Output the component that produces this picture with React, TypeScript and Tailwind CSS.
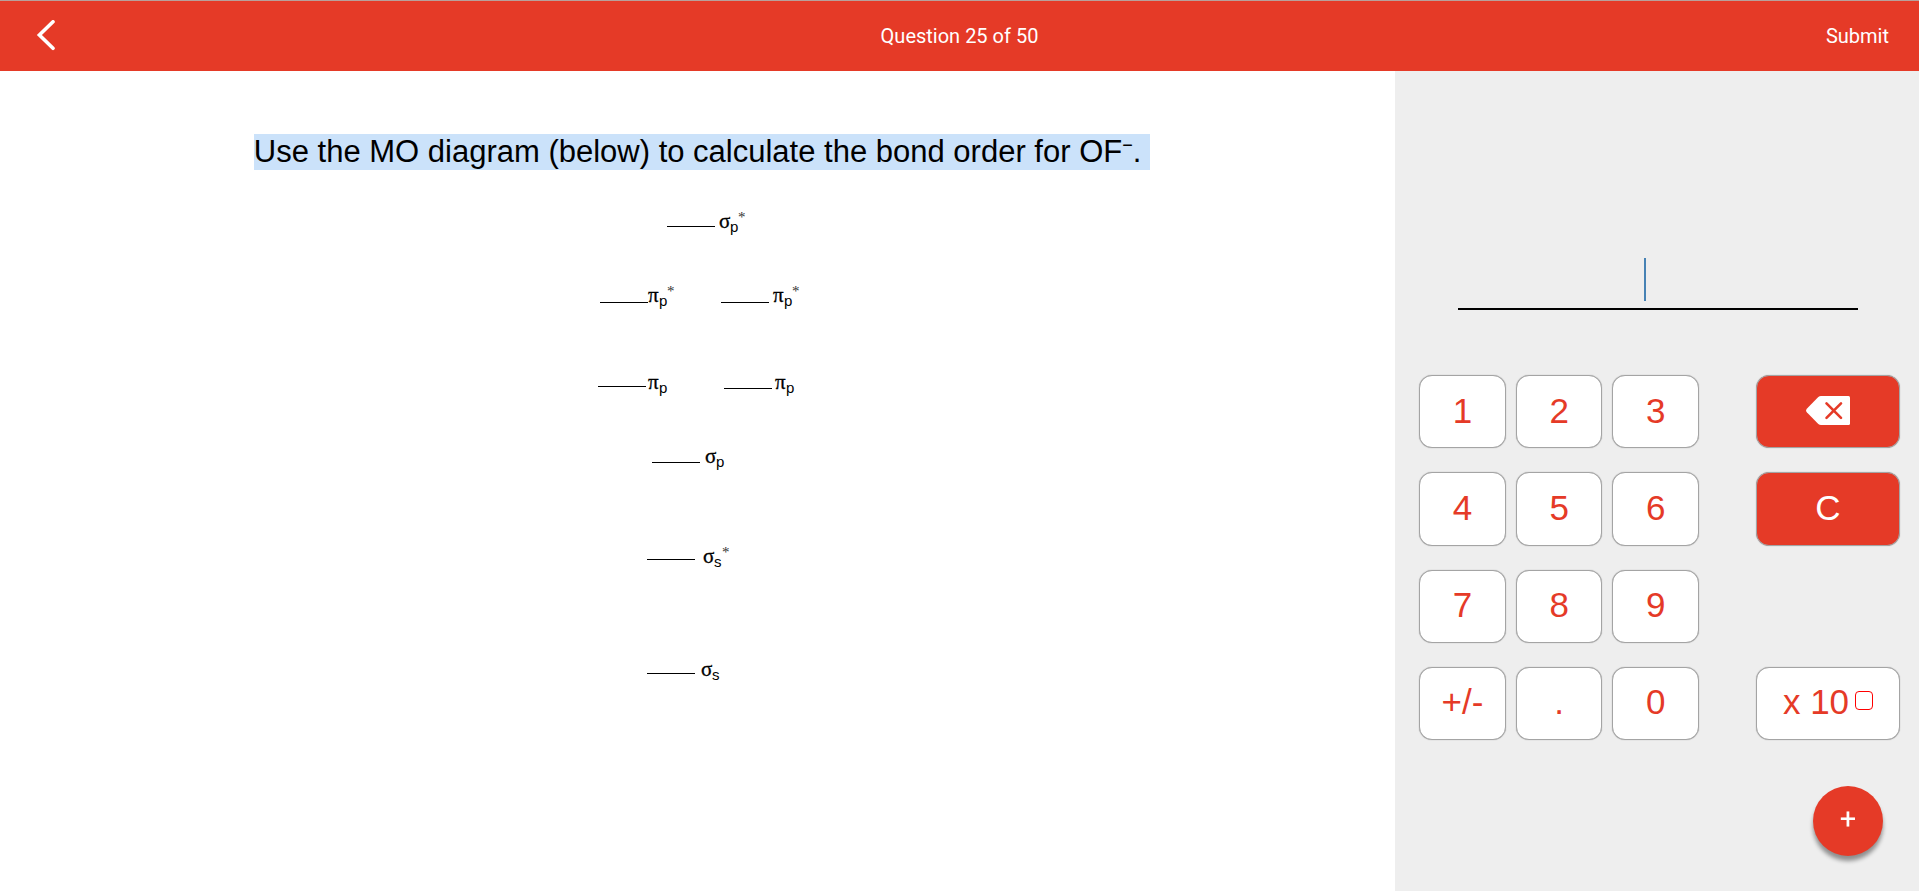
import { useState } from "react";

type Orbital = {
  symbol: string;
  sub: string;
  antibonding?: boolean;
  lineX: number;
  lineY: number;
  textX: number;
  textY: number;
};

const orbitals: Orbital[] = [
  { symbol: "σ", sub: "p", antibonding: true, lineX: 69, lineY: 26, textX: 121, textY: 28 },
  { symbol: "π", sub: "p", antibonding: true, lineX: 2, lineY: 102, textX: 50, textY: 102 },
  { symbol: "π", sub: "p", antibonding: true, lineX: 123, lineY: 102, textX: 175, textY: 102 },
  { symbol: "π", sub: "p", lineX: 0, lineY: 186, textX: 50, textY: 189 },
  { symbol: "π", sub: "p", lineX: 126, lineY: 188, textX: 177, textY: 189 },
  { symbol: "σ", sub: "p", lineX: 54, lineY: 262, textX: 107, textY: 263 },
  { symbol: "σ", sub: "s", antibonding: true, lineX: 49, lineY: 359, textX: 105, textY: 363 },
  { symbol: "σ", sub: "s", lineX: 49, lineY: 473, textX: 103, textY: 476 },
];

function MoDiagram() {
  return (
    <svg
      width="200"
      height="500"
      viewBox="0 0 200 500"
      role="img"
      aria-label="Molecular orbital diagram"
      className="overflow-visible"
    >
      {orbitals.map((o, i) => (
        <g key={i}>
          <rect x={o.lineX} y={o.lineY - 1} width="48" height="1" fill="#000" />
          <text
            x={o.textX}
            y={o.textY - 1}
            fontSize="21"
            stroke="#000"
            strokeWidth="0.3"
            className="font-['Liberation_Serif',serif]"
          >
            {o.symbol}
          </text>
          <text x={o.textX + 11} y={o.textY + 3} fontSize="15" className="font-['Liberation_Sans',sans-serif]">
            {o.sub}
          </text>
          {o.antibonding && (
            <text
              x={o.textX + 19}
              y={o.textY - 7}
              fontSize="15"
              fill="#333"
              className="font-['Liberation_Serif',serif]"
            >
              *
            </text>
          )}
        </g>
      ))}
    </svg>
  );
}

const keyBase =
  "flex items-center justify-center rounded-[13px] border border-[#a4a4a4] text-[35px] leading-[40px] pb-0.5 shadow-[0_0_1px_#999]";
const lightKey = "bg-white text-[#e53a27]";
const redKey = "bg-[#e53a27] text-white";

const digitKeys = ["1", "2", "3", "4", "5", "6", "7", "8", "9", "+/-", ".", "0"];

export default function App() {
  const [value, setValue] = useState("");

  const press = (key: string) => {
    if (key === "+/-") {
      setValue((v) => (v.startsWith("-") ? v.slice(1) : "-" + v));
    } else {
      setValue((v) => v + key);
    }
  };

  return (
    <div className="flex min-h-screen flex-col bg-white font-['Liberation_Sans',Arial,sans-serif] text-black">
      <header className="grid h-[71px] grid-cols-3 items-center border-t border-[#b8a09b] bg-[#e53a27] px-[30px] font-[Roboto,sans-serif] text-[20px] leading-6 text-white">
        <button type="button" aria-label="Back" className="justify-self-start pl-1.5">
          <svg width="20" height="32" viewBox="0 0 20 32" fill="none" stroke="#fff" strokeWidth="3.6" strokeLinecap="round" strokeLinejoin="miter">
            <path d="M17 1.800 3.400 15l13.600 13.300" />
          </svg>
        </button>
        <h1 className="text-center">Question 25 of 50</h1>
        <button type="button" className="justify-self-end">
          Submit
        </button>
      </header>

      <div className="flex flex-1">
        <main className="flex flex-1 flex-col items-center pt-[63px]">
          <p className="text-center text-[31px] leading-9">
            <mark className="-mr-[9px] inline-block h-9 bg-[#cbe2fa] pr-[9px] text-black">
              Use the MO diagram (below) to calculate the bond order for OF
              <sup className="-top-[0.6em] text-[18px]">−</sup>.
            </mark>
          </p>
          <div className="mt-[31px]">
            <MoDiagram />
          </div>
        </main>

        <aside className="flex w-[27.3%] flex-col bg-[#eee] pr-[19px] pl-6">
          <div className="relative mt-[179px] mr-[42px] ml-[39px]">
            <input
              type="text"
              aria-label="Answer"
              value={value}
              onChange={(e) => setValue(e.target.value)}
              className="block h-[60px] w-full border-b-2 border-black bg-transparent text-center text-[35px] caret-transparent outline-none"
            />
            <span className="absolute bottom-[9px] left-1/2 -ml-3.5 h-[43px] w-0.5 bg-[#4682b4]" />
          </div>

          <div className="mt-[65px] flex h-[365px] justify-between">
            <div className="grid w-[280px] grid-cols-3 grid-rows-4 gap-x-2.5 gap-y-6">
              {digitKeys.map((key) => (
                <button key={key} type="button" onClick={() => press(key)} className={`${keyBase} ${lightKey}`}>
                  {key}
                </button>
              ))}
            </div>
            <div className="grid w-36 grid-rows-4 gap-y-6">
              <button
                type="button"
                aria-label="Backspace"
                onClick={() => setValue((v) => v.slice(0, -1))}
                className={`${keyBase} ${redKey}`}
              >
                <svg width="44" height="29" viewBox="0 0 44 29">
                  <path d="M15 0H42.500Q44 0 44 1.500V27.500Q44 29 42.500 29H15Q13.500 29 12.300 28L.8 16.300Q-.6 14.500 .8 12.700L12.300 1Q13.500 0 15 0Z" fill="#fff" />
                  <path d="M20.500 7.300 35 21.800M35 7.300 20.500 21.800" stroke="#e53a27" strokeWidth="2.600" strokeLinecap="round" />
                </svg>
              </button>
              <button type="button" onClick={() => setValue("")} className={`${keyBase} ${redKey}`}>
                C
              </button>
              <button
                type="button"
                onClick={() => setValue((v) => v + "e")}
                className={`row-start-4 gap-1.5 ${keyBase} ${lightKey}`}
              >
                x 10
                <span className="mb-1 h-[19px] w-[18px] rounded border border-[#ff0000]" />
              </button>
            </div>
          </div>
        </aside>
      </div>

      <button
        type="button"
        aria-label="Add"
        className="fixed right-9 bottom-[35px] flex size-[70px] items-center justify-center rounded-full bg-[#e53a27] pb-1 font-[Roboto,sans-serif] text-[29px] leading-8 text-white shadow-[0_5px_4px_rgba(0,0,0,0.4)]"
      >
        +
      </button>
    </div>
  );
}
